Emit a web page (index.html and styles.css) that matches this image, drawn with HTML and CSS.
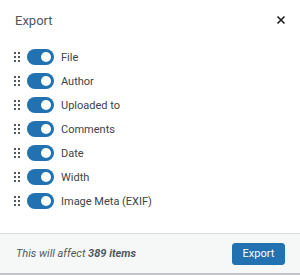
FILE: index.html
```html
<!DOCTYPE html>
<html>
<head>
<meta charset="utf-8">
<link rel="stylesheet" href="styles.css">
</head>
<body>
<div class="modal">
  <div class="header">
    <h1 class="title">Export</h1>
    <button class="close" aria-label="Close">
      <svg width="10" height="10" viewBox="0 0 10 10"><path d="M1.5 1.5 L8.5 8.5 M8.5 1.5 L1.5 8.5" stroke="#1e1e1e" stroke-width="1.6" fill="none"/></svg>
    </button>
  </div>
  <ul class="fields">
    <li class="row"><span class="grip"></span><span class="toggle"></span><span class="label">File</span></li>
    <li class="row"><span class="grip"></span><span class="toggle"></span><span class="label">Author</span></li>
    <li class="row"><span class="grip"></span><span class="toggle"></span><span class="label">Uploaded to</span></li>
    <li class="row"><span class="grip"></span><span class="toggle"></span><span class="label">Comments</span></li>
    <li class="row"><span class="grip"></span><span class="toggle"></span><span class="label">Date</span></li>
    <li class="row"><span class="grip"></span><span class="toggle"></span><span class="label">Width</span></li>
    <li class="row"><span class="grip"></span><span class="toggle"></span><span class="label">Image Meta (EXIF)</span></li>
  </ul>
  <div class="footer">
    <span class="note">This will affect <b>389 items</b></span>
    <button class="btn">Export</button>
  </div>
</div>
</body>
</html>
```
FILE: styles.css
```css
* { box-sizing: border-box; }
html, body { margin: 0; padding: 0; background: #fff; }
body { font-family: Roboto, "Liberation Sans", Arial, sans-serif; color: #1e1e1e; }
.modal { width: 300px; height: 275px; display: flex; flex-direction: column; border-bottom: 2px solid #c3c4c7; }
.header { display: flex; align-items: center; justify-content: space-between; height: 38px; padding: 2px 13px 0 15px; }
.title { margin: 0; font-size: 13px; font-weight: 400; color: #50575e; }
.close { border: 0; background: none; padding: 0; width: 12px; height: 12px; display: flex; align-items: center; justify-content: center; }
.fields { list-style: none; margin: 0; padding: 11px 0 0 14px; flex: 1; display: flex; flex-direction: column; gap: 8px; }
.row { display: flex; align-items: center; height: 16px; }
.grip { width: 6px; height: 10px; margin-right: 7px;
  background-image: radial-gradient(circle, #50575e 0.9px, transparent 1.1px);
  background-size: 4px 4px; background-position: -1px -1px; }
.toggle { position: relative; width: 27px; height: 16px; border-radius: 8px; background: #2271b1; margin-right: 7px; }
.toggle::after { content: ""; position: absolute; right: 3px; top: 3px; width: 10px; height: 10px; border-radius: 50%; background: #fff; }
.label { font-size: 11px; color: #3c434a; }
.footer { height: 40px; border-top: 1px solid #dcdcde; background: #f6f7f7; display: flex; align-items: center; justify-content: space-between; padding: 0 15px 0 16px; }
.note { font-size: 11px; font-style: italic; color: #50575e; }
.note b { font-weight: 700; }
.btn { width: 53px; height: 22px; border: 1px solid #2271b1; border-radius: 3px; background: #2271b1; color: #fff; font-family: Roboto, "Liberation Sans", Arial, sans-serif; font-size: 11px; padding: 0; }
```
